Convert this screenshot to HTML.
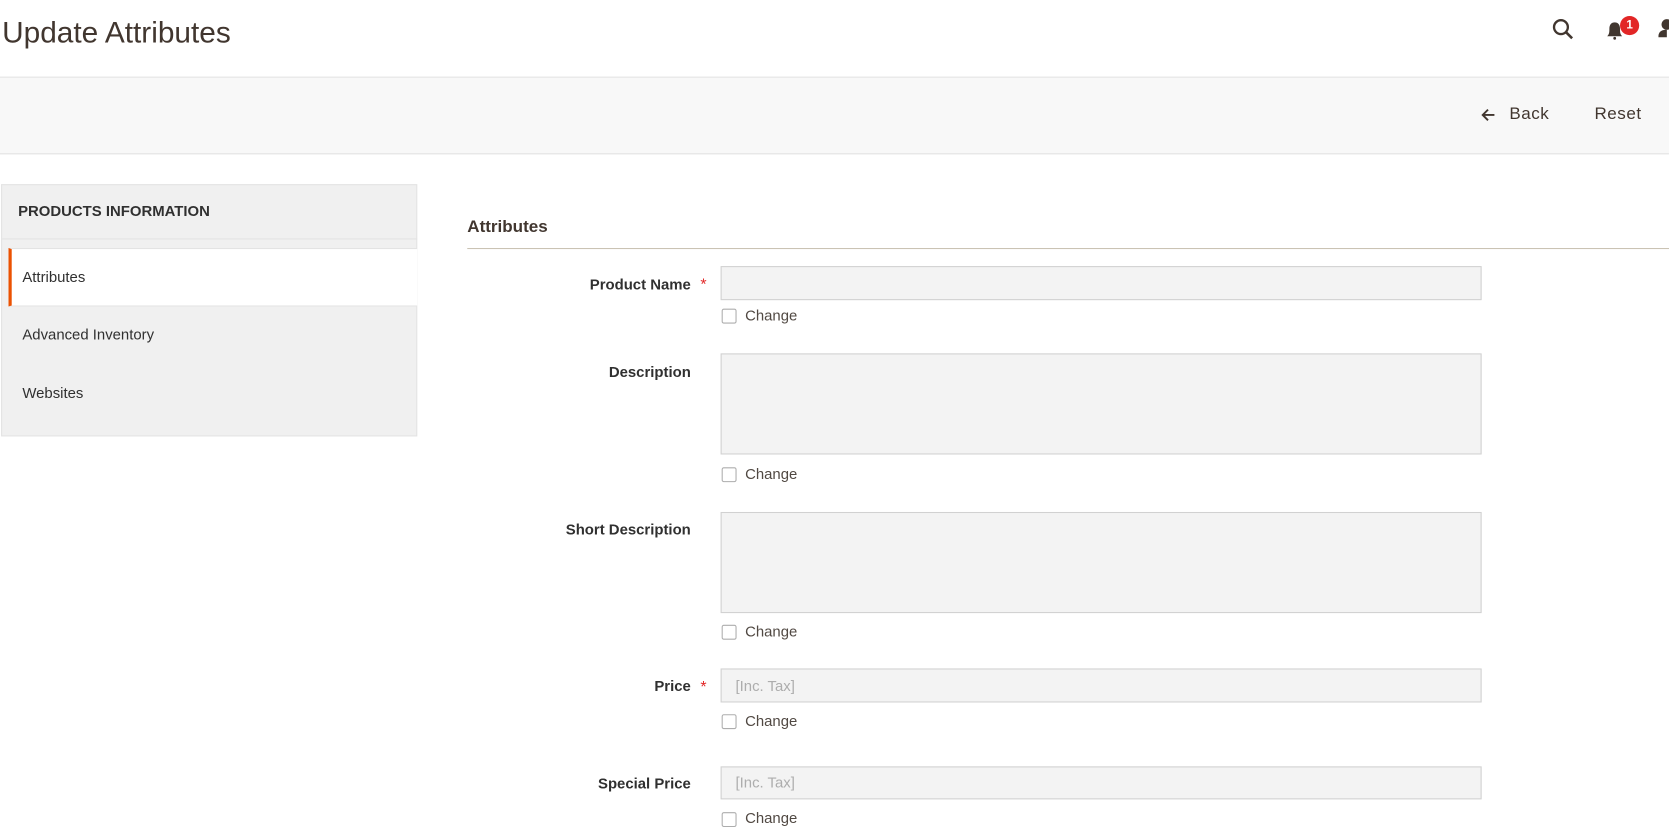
<!DOCTYPE html>
<html><head><meta charset="utf-8"><style>
*{box-sizing:border-box;margin:0;padding:0}
html,body{width:1669px;height:828px;overflow:hidden;background:#fff}
body{font-family:"Liberation Sans",Arial,sans-serif;color:#303030;position:relative}
#w{position:absolute;left:0;top:0;width:1568px;height:778px;transform:scale(1.0644);transform-origin:0 0}
.a{position:absolute}
.lbl{position:absolute;right:919px;font-size:14px;font-weight:bold;color:#303030;text-align:right;white-space:nowrap}
.star{position:absolute;left:658px;color:#e22626;font-size:15px}
.inp{position:absolute;left:677px;width:715px;background:#f3f3f3;border:1px solid #d1d1d1;font-size:14px;color:#adadad;padding-left:13px}
.cb{position:absolute;left:678px;width:14px;height:14px;border:1px solid #adadad;border-radius:2px;background:#fff}
.ch{position:absolute;left:700px;font-size:14px;color:#514943}
</style></head><body><div id="w">
<div class="a" style="left:2px;top:15px;font-size:28px;color:#41362f">Update Attributes</div>
<svg class="a" style="left:1457px;top:16px" width="24" height="24" viewBox="0 0 24 24"><circle cx="9.5" cy="9.5" r="6.5" fill="none" stroke="#41362f" stroke-width="2.2"/><path d="M14.5 14.5L20 20" stroke="#41362f" stroke-width="2.4"/></svg>
<svg class="a" style="left:1508px;top:18px" width="18" height="20" viewBox="0 0 18 20"><path d="M2 16C4 14 4 12 4 9C4 5 6 3 9 3C12 3 14 5 14 9C14 12 14 14 16 16Z" fill="#41362f"/><circle cx="9" cy="18" r="1.3" fill="#41362f"/></svg>
<div class="a" style="left:1522px;top:15px;width:18px;height:18px;border-radius:50%;background:#e22626;color:#fff;font-size:11px;font-weight:bold;text-align:center;line-height:18px">1</div>
<svg class="a" style="left:1558px;top:17px" width="12" height="20" viewBox="0 0 12 20"><circle cx="8" cy="6" r="5" fill="#41362f"/><path d="M0 18C0 12 4 11 8 11V18Z" fill="#41362f"/></svg>
<div class="a" style="left:0;top:72px;width:1568px;height:73px;background:#f8f8f8;border-top:1px solid #e3e3e3;border-bottom:1px solid #e3e3e3"></div>
<svg class="a" style="left:1391px;top:101px" width="14" height="14" viewBox="0 0 14 14"><path d="M13 7H2M7 2L2 7L7 12" fill="none" stroke="#41362f" stroke-width="1.8"/></svg>
<div class="a" style="left:1418px;top:99px;font-size:16px;color:#41362f;letter-spacing:.5px">Back</div>
<div class="a" style="left:1498px;top:99px;font-size:16px;color:#41362f;letter-spacing:.5px">Reset</div>
<div class="a" style="left:1px;top:173px;width:391px;height:237px;background:#f0f0f0;border:1px solid #e3e3e3"></div>
<div class="a" style="left:1px;top:224px;width:391px;height:1px;background:#e3e3e3"></div>
<div class="a" style="left:17px;top:190px;font-size:14px;font-weight:bold;color:#303030">PRODUCTS INFORMATION</div>
<div class="a" style="left:8px;top:233px;width:384px;height:55px;background:#fff;border-top:1px solid #e3e3e3;border-bottom:1px solid #e3e3e3;border-left:3px solid #eb5202"></div>
<div class="a" style="left:21px;top:252px;font-size:14px;color:#303030">Attributes</div>
<div class="a" style="left:21px;top:306px;font-size:14px;color:#303030">Advanced Inventory</div>
<div class="a" style="left:21px;top:361px;font-size:14px;color:#303030">Websites</div>
<div class="a" style="left:439px;top:205px;font-size:16px;font-weight:bold;color:#41362f">Attributes</div>
<div class="a" style="left:439px;top:233px;width:1130px;height:1px;background:#cac3b4"></div>

<div class="lbl" style="top:259px">Product Name</div><div class="star" style="top:259px">*</div>
<div class="inp" style="top:250px;height:32px"></div>
<div class="cb" style="top:290px"></div><div class="ch" style="top:288px">Change</div>

<div class="lbl" style="top:341px">Description</div>
<div class="inp" style="top:332px;height:95px"></div>
<div class="cb" style="top:439px"></div><div class="ch" style="top:437px">Change</div>

<div class="lbl" style="top:489px">Short Description</div>
<div class="inp" style="top:481px;height:95px"></div>
<div class="cb" style="top:587px"></div><div class="ch" style="top:585px">Change</div>

<div class="lbl" style="top:636px">Price</div><div class="star" style="top:637px">*</div>
<div class="inp" style="top:628px;height:32px;line-height:30px">[Inc. Tax]</div>
<div class="cb" style="top:671px"></div><div class="ch" style="top:669px">Change</div>

<div class="lbl" style="top:728px">Special Price</div>
<div class="inp" style="top:720px;height:31px;line-height:29px">[Inc. Tax]</div>
<div class="cb" style="top:763px"></div><div class="ch" style="top:760px">Change</div>
</div></body></html>
